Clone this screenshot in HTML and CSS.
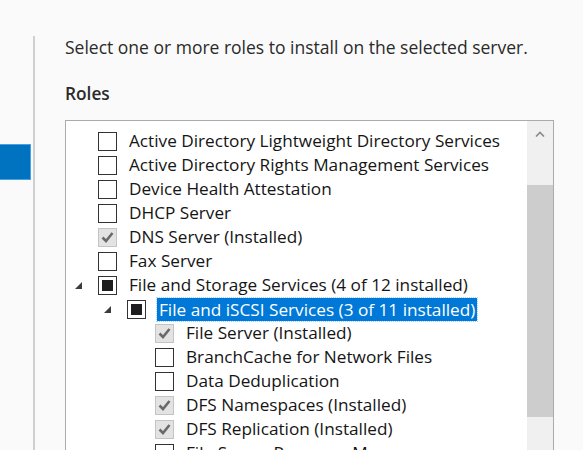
FILE: index.html
```html
<!DOCTYPE html>
<html>
<head>
<meta charset="utf-8">
<link rel="stylesheet" href="styles.css">
</head>
<body>
<div class="page">
  <div class="nav">
    <div class="nav-item"></div>
  </div>
  <div class="divider"></div>
  <div class="content">
    <p class="intro">Select one or more roles to install on the selected server.</p>
    <h2 class="heading">Roles</h2>
    <div class="listbox">
      <div class="rows">
        <div class="row"><span class="exp"></span><span class="cb"></span><span class="label">Active Directory Lightweight Directory Services</span></div>
        <div class="row"><span class="exp"></span><span class="cb"></span><span class="label">Active Directory Rights Management Services</span></div>
        <div class="row"><span class="exp"></span><span class="cb"></span><span class="label">Device Health Attestation</span></div>
        <div class="row"><span class="exp"></span><span class="cb"></span><span class="label">DHCP Server</span></div>
        <div class="row"><span class="exp"></span><span class="cb done"><svg viewBox="0 0 17 17" width="17" height="17"><polyline points="3.5,8.5 7,12 13.5,4" fill="none" stroke="#6a6a6a" stroke-width="2.6"/></svg></span><span class="label">DNS Server (Installed)</span></div>
        <div class="row"><span class="exp"></span><span class="cb"></span><span class="label">Fax Server</span></div>
        <div class="row"><span class="exp"><svg viewBox="0 0 7 7" width="7" height="7"><polygon points="7,0 7,7 0,7" fill="#3c3c3c"/></svg></span><span class="cb part"><span class="fill"></span></span><span class="label">File and Storage Services (4 of 12 installed)</span></div>
        <div class="row l1"><span class="exp"><svg viewBox="0 0 7 7" width="7" height="7"><polygon points="7,0 7,7 0,7" fill="#3c3c3c"/></svg></span><span class="cb part"><span class="fill"></span></span><span class="label sel">File and iSCSI Services (3 of 11 installed)</span></div>
        <div class="row l2"><span class="exp"></span><span class="cb done"><svg viewBox="0 0 17 17" width="17" height="17"><polyline points="3.5,8.5 7,12 13.5,4" fill="none" stroke="#6a6a6a" stroke-width="2.6"/></svg></span><span class="label">File Server (Installed)</span></div>
        <div class="row l2"><span class="exp"></span><span class="cb"></span><span class="label">BranchCache for Network Files</span></div>
        <div class="row l2"><span class="exp"></span><span class="cb"></span><span class="label">Data Deduplication</span></div>
        <div class="row l2"><span class="exp"></span><span class="cb done"><svg viewBox="0 0 17 17" width="17" height="17"><polyline points="3.5,8.5 7,12 13.5,4" fill="none" stroke="#6a6a6a" stroke-width="2.6"/></svg></span><span class="label">DFS Namespaces (Installed)</span></div>
        <div class="row l2"><span class="exp"></span><span class="cb done"><svg viewBox="0 0 17 17" width="17" height="17"><polyline points="3.5,8.5 7,12 13.5,4" fill="none" stroke="#6a6a6a" stroke-width="2.6"/></svg></span><span class="label">DFS Replication (Installed)</span></div>
        <div class="row l2"><span class="exp"></span><span class="cb"></span><span class="label">File Server Resource Manager</span></div>
      </div>
      <div class="scrollbar">
        <div class="sb-btn"><svg viewBox="0 0 10 6" width="10" height="6"><polyline points="1,5.5 5,1.5 9,5.5" fill="none" stroke="#8a8a8a" stroke-width="1.6"/></svg></div>
        <div class="sb-gap"></div>
        <div class="sb-thumb"></div>
        <div class="sb-rest"></div>
      </div>
    </div>
  </div>
</div>
</body>
</html>
```

FILE: styles.css
```css
html, body {
  margin: 0;
  padding: 0;
  height: 100%;
  overflow: hidden;
  background: #fafafa;
}
body {
  font-family: "Open Sans", "Noto Sans", sans-serif;
  color: #151515;
}
.page {
  display: flex;
  height: 450px;
}
.nav {
  width: 31px;
  padding-top: 144px;
  margin-right: 2px;
}
.nav-item {
  height: 34px;
  background: #0073c0;
  border: 1px solid #4aa0e0;
  border-left: none;
}
.divider {
  width: 2px;
  margin-top: 36px;
  background: #d0d0d0;
}
.content {
  flex: 1;
  padding-left: 30px;
  padding-top: 36px;
}
.intro {
  margin: 0;
  font-size: 17.5px;
  line-height: 22px;
  color: #2a2a2a;
}
.heading {
  margin: 25px 0 0 0;
  font-size: 17.3px;
  font-weight: 600;
  line-height: 22px;
  color: #2a2a2a;
}
.listbox {
  margin-top: 15px;
  width: 487px;
  height: 340px;
  border: 1px solid #ababab;
  background: #fff;
  display: flex;
  overflow: hidden;
}
.rows {
  flex: 1;
  padding-top: 8px;
  overflow: hidden;
}
.row {
  display: flex;
  align-items: center;
  height: 24px;
  font-size: 17.2px;
  white-space: nowrap;
}
.row.l1 { padding-left: 29px; }
.row.l2 { padding-left: 57px; }
.exp {
  width: 32px;
  height: 24px;
  display: flex;
  align-items: center;
  padding-left: 9px;
  box-sizing: border-box;
  flex-shrink: 0;
}
.cb {
  width: 19px;
  height: 19px;
  box-sizing: border-box;
  border: 1px solid #333;
  background: #fff;
  flex-shrink: 0;
  display: flex;
  align-items: center;
  justify-content: center;
}
.cb.done {
  background: #e3e3e3;
  border-color: #c4c4c4;
}
.cb.part .fill {
  width: 11px;
  height: 11px;
  background: #1e1e1e;
}
.label {
  margin-left: 12px;
  line-height: 24px;
}
.label.sel {
  margin-left: 11px;
  padding: 0 2px;
  height: 23px;
  line-height: 23px;
  background: #0078d7;
  color: #fff;
  outline: 1px dotted #9fd0f5;
}
.scrollbar {
  width: 26px;
  flex-shrink: 0;
  background: #f0f0f0;
  display: flex;
  flex-direction: column;
}
.sb-btn {
  height: 26px;
  display: flex;
  align-items: center;
  justify-content: center;
}
.sb-gap {
  height: 38px;
}
.sb-thumb {
  height: 232px;
  background: #cdcdcd;
}
.sb-rest {
  flex: 1;
}
```
